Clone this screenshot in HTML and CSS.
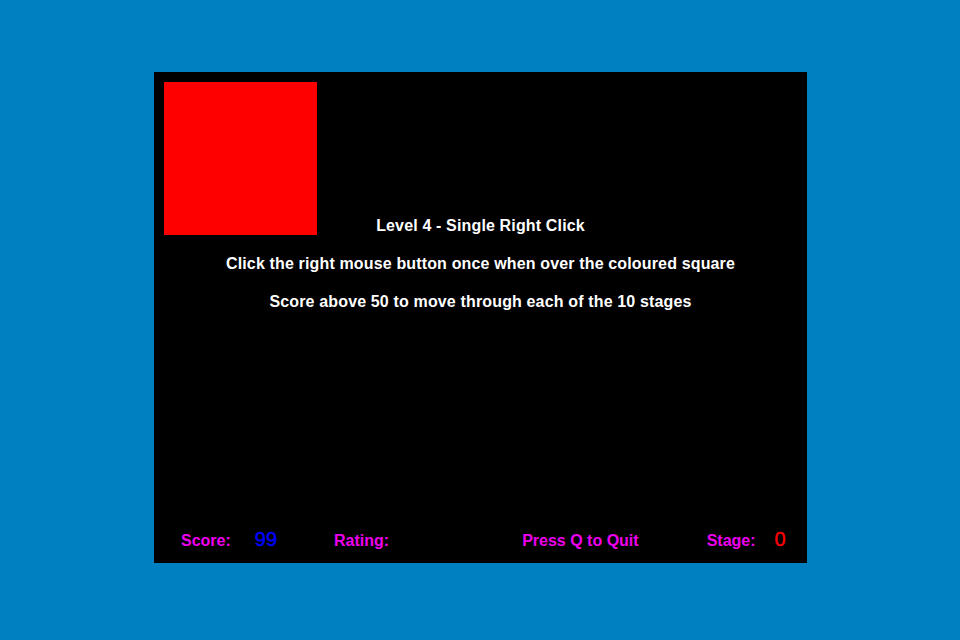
FILE: index.html
```html
<!DOCTYPE html>
<html>
<head>
<meta charset="utf-8">
<title>Mouse Skills - Level 4</title>
<link rel="stylesheet" href="styles.css">
</head>
<body>
<div class="stage">
  <div class="panel">
    <div class="target"></div>
    <div class="messages">
      <p class="line">Level 4 - Single Right Click</p>
      <p class="line">Click the right mouse button once when over the coloured square</p>
      <p class="line">Score above 50 to move through each of the 10 stages</p>
    </div>
    <div class="status">
      <span class="label score-label">Score:</span>
      <span class="value score-value">99</span>
      <span class="label rating-label">Rating:</span>
      <span class="label quit-label">Press Q to Quit</span>
      <span class="label stage-label">Stage:</span>
      <span class="value stage-value">0</span>
    </div>
  </div>
</div>
</body>
</html>
```
FILE: styles.css
```css
html, body {
  margin: 0;
  padding: 0;
}
body {
  background: #0080c0;
  width: 960px;
  height: 640px;
  overflow: hidden;
  font-family: "Liberation Sans", Arial, sans-serif;
}
.stage {
  padding-top: 72px;
  padding-left: 154px;
}
.panel {
  position: relative;
  width: 653px;
  height: 491px;
  background: #000;
  display: flex;
  flex-direction: column;
}
.target {
  position: absolute;
  left: 10px;
  top: 10px;
  width: 153px;
  height: 153px;
  background: #ff0000;
}
.messages {
  padding-top: 135px;
  text-align: center;
  color: #fff;
  font-weight: bold;
  font-size: 16px;
  line-height: 38px;
  letter-spacing: 0.15px;
}
.line {
  margin: 0;
}
.status {
  margin-top: auto;
  display: flex;
  align-items: baseline;
  padding-left: 27px;
  padding-bottom: 10px;
  line-height: 24px;
}
.label {
  color: #ee00ee;
  font-weight: bold;
  font-size: 16px;
}
.value {
  font-size: 20px;
  font-weight: normal;
  -webkit-text-stroke: 0.4px currentColor;
}
.score-value {
  color: #0000ff;
  margin-left: 24px;
}
.rating-label {
  margin-left: 57px;
}
.quit-label {
  margin-left: 133px;
}
.stage-label {
  margin-left: 68px;
}
.stage-value {
  color: #ff0000;
  margin-left: 19px;
}
```
